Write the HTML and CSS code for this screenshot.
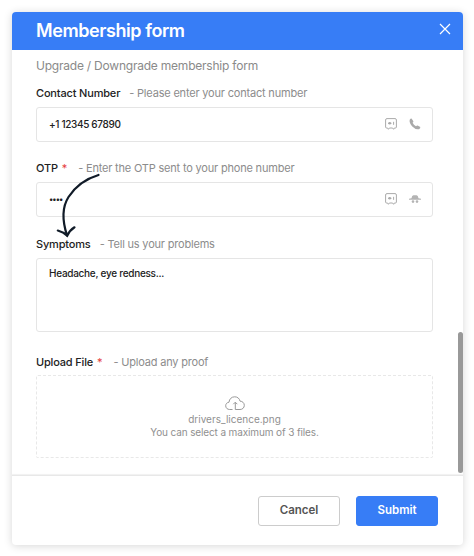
FILE: index.html
```html
<!DOCTYPE html>
<html lang="en">
<head>
  <meta charset="UTF-8">
  <meta name="viewport" content="width=device-width, initial-scale=1.0">
  <title>Membership form</title>
  <link rel="stylesheet" href="styles.css">
</head>
<body>
  <div class="modal">
    <div class="header">
      <h1>Membership form</h1>
      <svg class="close" viewBox="0 0 12 12"><path d="M1 1l10 10M11 1L1 11"/></svg>
    </div>

    <div class="content">
      <p class="subtitle">Upgrade / Downgrade membership form</p>

      <div class="field contact">
        <div class="row"><label>Contact Number</label><span class="hint">- Please enter your contact number</span></div>
        <div class="input">
          <span class="value">+1 12345 67890</span>
          <svg class="icon" viewBox="0 0 12 12"><path class="line" d="M2 .6h8q1.400 0 1.400 1.400v7q0 1-1 1H9.400L8.600 11.300 7.600 10H4.400L3.400 11.300 2.600 10h-1q-1 0-1-1V2Q.6.6 2 .6z"/><circle cx="4.700" cy="5.300" r="1.300"/><path class="line" d="M3 5.300h3.500M8.600 3.800v3"/></svg>
          <svg class="icon" viewBox="0 0 12 12"><path d="M.7 1.800Q1.500.5 2.500.6L4.400 3.200q.1.700-.8 1.600Q4.600 7 7 8.200q.8-.9 1.600-.8l2.700 1.700q.2 1.200-1.300 2.100Q6.600 12 3.300 8.600 0 5 .7 1.800z"/></svg>
        </div>
      </div>

      <div class="field otp">
        <div class="row"><label>OTP</label><span class="required">*</span><span class="hint">- Enter the OTP sent to your phone number</span></div>
        <div class="input">
          <span class="value dots">••••</span>
          <svg class="icon" viewBox="0 0 12 12"><path class="line" d="M2 .6h8q1.400 0 1.400 1.400v7q0 1-1 1H9.400L8.600 11.300 7.600 10H4.400L3.400 11.300 2.600 10h-1q-1 0-1-1V2Q.6.6 2 .6z"/><circle cx="4.700" cy="5.300" r="1.300"/><path class="line" d="M3 5.300h3.500M8.600 3.800v3"/></svg>
          <svg class="icon incognito" viewBox="0 0 12 12"><path d="M2.500 5.200Q3 2.200 4.400 2.200h3.200q1.400 0 1.900 3l2.500.6v.9H0v-.9z"/><circle cx="4" cy="8.600" r="1.300"/><circle cx="8" cy="8.600" r="1.300"/></svg>
        </div>
      </div>

      <div class="field symptoms">
        <div class="row"><label>Symptoms</label><span class="hint">- Tell us your problems</span></div>
        <div class="textarea">Headache, eye redness...</div>
      </div>

      <div class="field upload">
        <div class="row"><label>Upload File</label><span class="required">*</span><span class="hint">- Upload any proof</span></div>
        <div class="dropzone">
          <svg class="cloud" viewBox="0 0 20 15"><path d="M7.500 13.500H4.700C2.300 13.500.700 11.900.700 9.800c0-2 1.400-3.400 3.300-3.600C4.300 3 6.500.800 9.700.800c2.800 0 4.800 1.700 5.300 4.300 2.500.2 4.300 1.800 4.300 4.200 0 2.500-1.800 4.200-4.300 4.200h-4.700V6.400M8.300 8.200l2-2 2 2"/></svg>
          <span class="filename">drivers_licence.png</span>
          <span class="limit">You can select a maximum of 3 files.</span>
        </div>
      </div>
    </div>
    <div class="scrollbar"></div>

    <div class="footer">
      <button class="cancel">Cancel</button>
      <button class="submit">Submit</button>
    </div>
  </div>

  <svg class="arrow" viewBox="0 0 50 70"><path class="shaft" d="M43.500 5C30 9 20 17 13.500 27 6.500 38 7 50 12 65.500"/><path class="head" d="M2.800 60.500Q8.500 62 12.200 65.700 14.500 60.500 19.500 57.300"/></svg>
</body>
</html>
```
FILE: styles.css
```css
* {
  box-sizing: border-box;
}
body {
  margin: 0;
  padding: 12px 11px 11px 12px;
  height: 556px;
  overflow: hidden;
  background-color: #fff;
  font-family: Inter, "Liberation Sans", sans-serif;
}
.modal {
  position: relative;
  height: 533px;
  border-radius: 4px;
  background-color: #fff;
  box-shadow: 0 1px 9px rgba(0, 0, 0, 0.16);
}
.header {
  display: flex;
  align-items: center;
  justify-content: space-between;
  height: 38px;
  padding: 0 12px 1px 24px;
  border-radius: 4px 4px 0 0;
  background-color: #377df6;
}
h1 {
  margin: 0;
  color: #fff;
  font-size: 18px;
  font-weight: 600;
  letter-spacing: -0.42px;
}
.close {
  width: 12px;
  height: 12px;
  margin-bottom: 3px;
  fill: none;
  stroke: #fff;
  stroke-width: 1.2;
}
.content {
  height: 425px;
  padding: 8px 30px 0 24px;
}
.subtitle {
  margin: 0;
  height: 27px;
  color: #8a8a8a;
  font-size: 12px;
  letter-spacing: -0.22px;
  line-height: 16px;
}
.row {
  display: flex;
  height: 22px;
  font-size: 11px;
  letter-spacing: -0.17px;
  line-height: 16px;
  white-space: nowrap;
}
label {
  color: #222;
  font-weight: 500;
}
.required {
  margin-left: 4px;
  color: #e5403c;
}
.hint {
  margin-left: 9px;
  color: #8c8c8c;
  letter-spacing: -0.19px;
}
.required + .hint {
  margin-left: 11px;
}
.field {
  height: 75px;
}
.input {
  display: flex;
  align-items: center;
  gap: 12px;
  height: 35px;
  padding: 0 11px 1px 12px;
  border: 1px solid #e5e5e5;
  border-radius: 3px;
}
.value {
  margin-right: auto;
  color: #222;
  font-size: 10px;
  font-weight: 500;
  letter-spacing: -0.35px;
}
.dots {
  font-size: 8px;
  letter-spacing: -0.9px;
}
.icon {
  width: 12px;
  height: 12px;
  fill: #aaa;
}
.incognito {
  fill: #b4b4b4;
}
.line {
  fill: none;
  stroke: #aaa;
}
.otp {
  height: 76px;
}
.symptoms {
  height: 117px;
}
.textarea {
  height: 74px;
  padding: 7px 12px;
  border: 1px solid #e5e5e5;
  border-radius: 3px;
  color: #222;
  font-size: 10px;
  font-weight: 500;
  letter-spacing: -0.27px;
  line-height: 14px;
}
.upload .row {
  line-height: 18px;
}
.dropzone {
  display: flex;
  flex-direction: column;
  align-items: center;
  height: 83px;
  padding-top: 20px;
  border: 1px dashed #e8e8e8;
  border-radius: 2px;
  color: #909090;
  font-size: 10px;
  line-height: 13px;
}
.cloud {
  width: 20px;
  height: 15px;
  margin-bottom: 2px;
  fill: none;
  stroke: #999;
}
.limit {
  letter-spacing: -0.13px;
}
/* thumb lies over the right edge of the form */
.scrollbar {
  position: absolute;
  top: 320px;
  right: 0;
  width: 5px;
  height: 141px;
  border-radius: 3px;
  background-color: #999;
}
.footer {
  display: flex;
  justify-content: flex-end;
  gap: 16px;
  height: 70px;
  padding: 20px 25px 0 0;
  border-top: 1px solid #e8e8e8;
  box-shadow: 0 -1px 1px #f1f1f1;
  border-radius: 0 0 4px 4px;
}
button {
  width: 82px;
  height: 30px;
  padding: 0 0 2px;
  border: 1px solid #ccc;
  border-radius: 3px;
  background-color: #fff;
  color: #555;
  font-family: inherit;
  font-size: 11.5px;
  font-weight: 600;
}
.submit {
  border-color: #377df6;
  background-color: #377df6;
  color: #fff;
}
.arrow {
  position: absolute;
  left: 55px;
  top: 170px;
  width: 50px;
  height: 70px;
}
.shaft,
.head {
  fill: none;
  stroke: #111b28;
  stroke-width: 2.2;
  stroke-linecap: round;
}
```
